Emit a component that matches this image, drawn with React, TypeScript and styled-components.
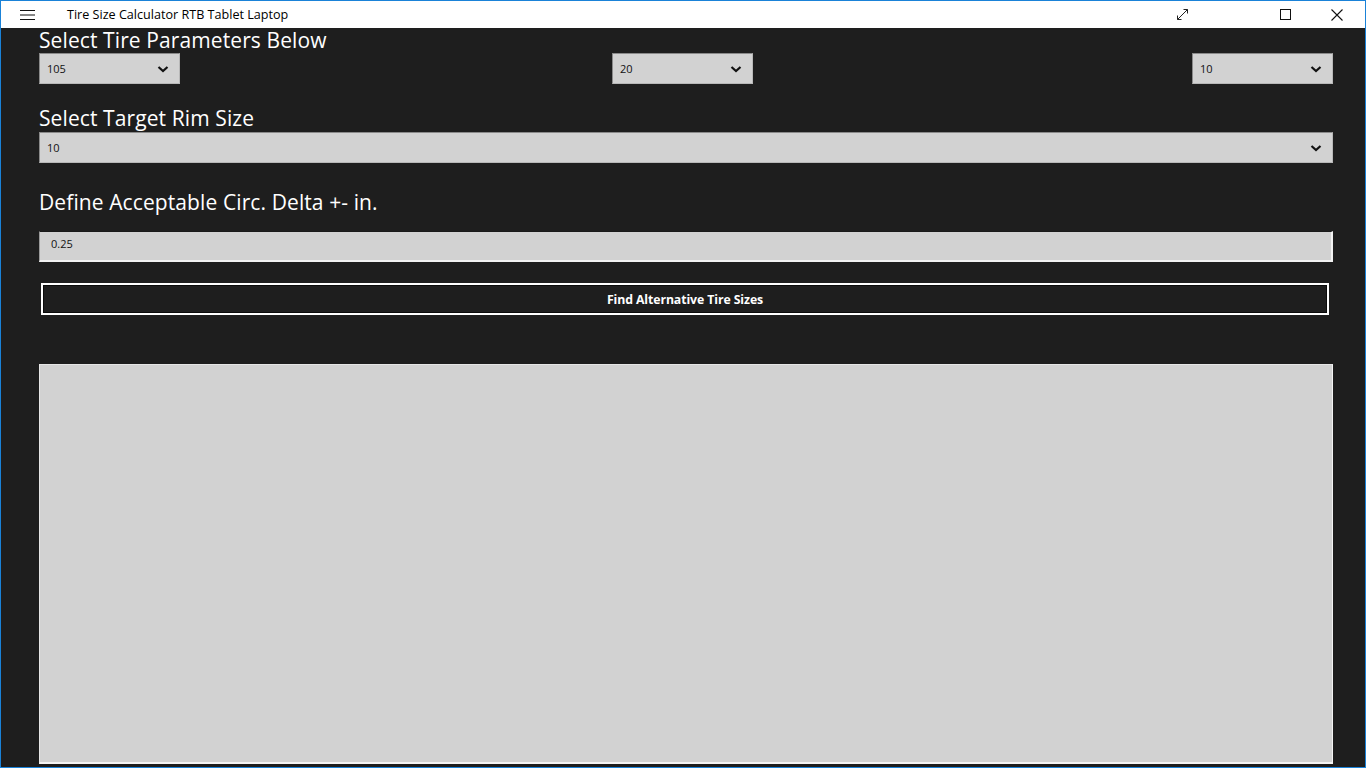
import React from "react";
import styled, { createGlobalStyle } from "styled-components";

const GlobalStyle = createGlobalStyle`
  html, body {
    margin: 0;
    padding: 0;
    background: #1e1e1e;
  }
  * {
    box-sizing: border-box;
  }
`;

const Window = styled.div`
  width: 1366px;
  height: 768px;
  border: 1px solid #1a82d8;
  background: #1e1e1e;
  display: flex;
  flex-direction: column;
  font-family: "Open Sans", "Noto Sans", sans-serif;
  overflow: hidden;
`;

const TitleBar = styled.div`
  height: 27px;
  background: #ffffff;
  display: flex;
  align-items: center;
  flex-shrink: 0;
`;

const MenuButton = styled.div`
  width: 54px;
  height: 27px;
  display: flex;
  align-items: center;
  padding-left: 19px;
`;

const Title = styled.div`
  font-size: 12.6px;
  color: #000;
  padding-left: 12px;
  flex: 1;
`;

const CaptionButton = styled.div<{ w: number }>`
  width: ${(p) => p.w}px;
  height: 27px;
  display: flex;
  align-items: center;
  justify-content: center;
`;

const Content = styled.div`
  flex: 1;
  padding: 0 32px 3px 38px;
  display: flex;
  flex-direction: column;
`;

const Heading = styled.div<{ mt: number }>`
  color: #ffffff;
  font-size: 21px;
  line-height: 24px;
  letter-spacing: 0.1px;
  margin-top: ${(p) => p.mt}px;
`;

const DropRow = styled.div`
  display: flex;
  justify-content: space-between;
  margin-top: 1px;
`;

const Select = styled.div<{ full?: boolean; mt?: number; shift?: number }>`
  width: ${(p) => (p.full ? "100%" : "141px")};
  height: 31px;
  margin-top: ${(p) => p.mt || 0}px;
  margin-right: ${(p) => p.shift || 0}px;
  background: #d2d2d2;
  border: 1px solid #b8b8b8;
  border-top-color: #8a8a8a;
  border-left-color: #8a8a8a;
  display: flex;
  align-items: center;
  justify-content: space-between;
  padding: 0 10px 0 7px;
  font-size: 11px;
  color: #111;
`;

const Input = styled.div`
  height: 31px;
  margin-top: 17px;
  background: #d2d2d2;
  border: 1px solid #f2f2f2;
  border-top-color: #1a1a1a;
  border-left-color: #9a9a9a;
  border-right-width: 2px;
  border-bottom-width: 2px;
  display: flex;
  align-items: center;
  padding: 0 0 5px 11px;
  font-size: 11px;
  color: #111;
`;

const ActionButton = styled.div`
  height: 32px;
  margin: 21px 4px 0 2px;
  border: 2px solid #ffffff;
  box-shadow: inset 0 0 0 1px #0a0a0a;
  background: #1e1e1e;
  color: #ffffff;
  font-size: 12.3px;
  font-weight: 700;
  letter-spacing: -0.1px;
  display: flex;
  align-items: center;
  justify-content: center;
`;

const ResultPanel = styled.div`
  flex: 1;
  margin-top: 49px;
  background: #d2d2d2;
  border: 1px solid #f4f4f4;
  border-top-color: #e6e6e6;
  border-left-color: #e6e6e6;
  border-bottom-width: 2px;
`;

const Chevron = () => (
  <svg width="12" height="8" viewBox="0 0 12 8">
    <path d="M1.5 2 L6 6 L10.5 2" fill="none" stroke="#111" strokeWidth="2.2" />
  </svg>
);

const Dropdown = ({
  value,
  full,
  mt,
  shift,
}: {
  value: string;
  full?: boolean;
  mt?: number;
  shift?: number;
}) => (
  <Select full={full} mt={mt} shift={shift}>
    <span>{value}</span>
    <Chevron />
  </Select>
);

export default function App() {
  return (
    <>
      <GlobalStyle />
      <Window>
        <TitleBar>
          <MenuButton>
            <svg width="16" height="12" viewBox="0 0 16 12">
              <path d="M0 1.5H15M0 6H15M0 10.5H15" stroke="#111" strokeWidth="1.2" />
            </svg>
          </MenuButton>
          <Title>Tire Size Calculator RTB Tablet Laptop</Title>
          <CaptionButton w={46}>
            <svg width="13" height="13" viewBox="0 0 13 13">
              <path
                d="M1.5 11.5 L11.5 1.5 M7.5 1.5 H11.5 V5.5 M1.5 7.5 V11.5 H5.5"
                fill="none"
                stroke="#222"
                strokeWidth="1"
              />
            </svg>
          </CaptionButton>
          <CaptionButton w={57} />
          <CaptionButton w={46}>
            <svg width="11" height="11" viewBox="0 0 11 11">
              <rect x="0.5" y="0.5" width="10" height="10" fill="none" stroke="#111" strokeWidth="1" />
            </svg>
          </CaptionButton>
          <CaptionButton w={57}>
            <svg width="12" height="12" viewBox="0 0 12 12">
              <path d="M0.5 0.5 L11.5 11.5 M11.5 0.5 L0.5 11.5" stroke="#111" strokeWidth="1.1" />
            </svg>
          </CaptionButton>
        </TitleBar>
        <Content>
          <Heading mt={0}>Select Tire Parameters Below</Heading>
          <DropRow>
            <Dropdown value="105" />
            <Dropdown value="20" shift={7} />
            <Dropdown value="10" />
          </DropRow>
          <Heading mt={22}>Select Target Rim Size</Heading>
          <Dropdown value="10" full mt={2} />
          <Heading mt={27}>Define Acceptable Circ. Delta +- in.</Heading>
          <Input>0.25</Input>
          <ActionButton>Find Alternative Tire Sizes</ActionButton>
          <ResultPanel />
        </Content>
      </Window>
    </>
  );
}
